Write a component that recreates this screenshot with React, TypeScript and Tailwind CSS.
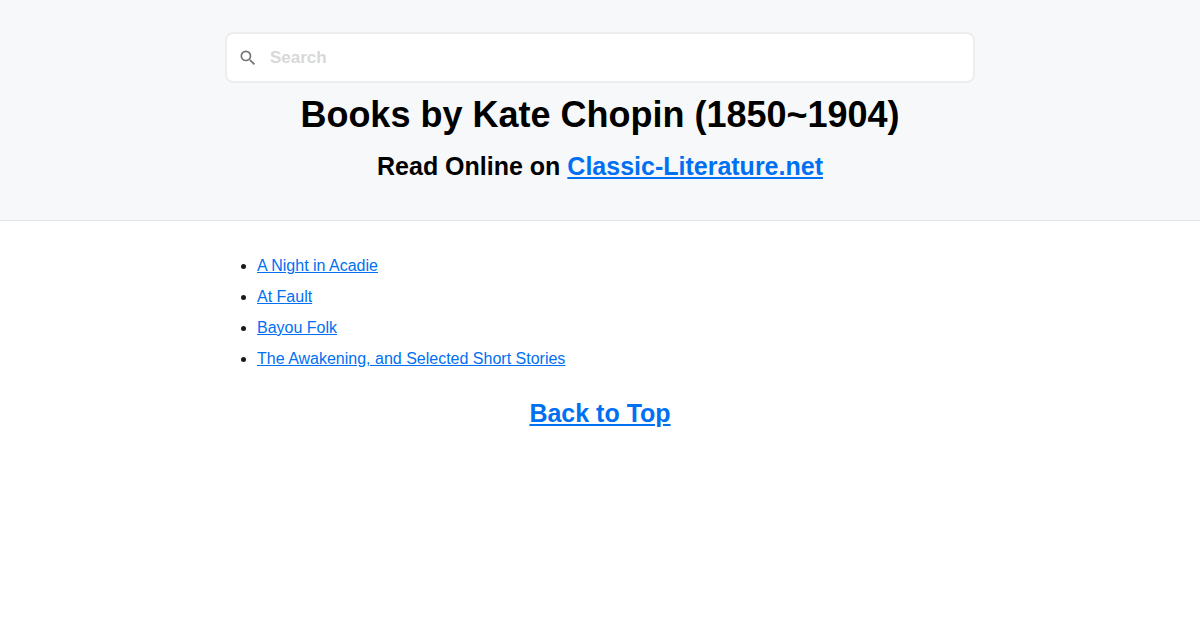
import React from 'react';
import { MdSearch } from 'react-icons/md';

const books = [
  'A Night in Acadie',
  'At Fault',
  'Bayou Folk',
  'The Awakening, and Selected Short Stories',
];

const linkClass = 'text-[#0070f3] underline';

const App: React.FC = () => {
  return (
    <div id="top" className="min-h-screen bg-white font-['Liberation_Sans',Arial,sans-serif] text-black">
      <header className="border-b border-[#e1e4e8] bg-[#f7f8fa] px-4 pt-8 pb-9">
        <div className="mx-auto max-w-[750px]">
          <form role="search" onSubmit={e => e.preventDefault()}>
            <label className="flex h-[51px] items-center gap-3 rounded-lg border-2 border-[#ededed] bg-white px-[11px]">
              <MdSearch className="size-5 shrink-0 text-[#757575]" aria-hidden="true" />
              <input
                type="search"
                aria-label="Search"
                placeholder="Search"
                className="min-w-0 flex-1 bg-transparent text-[17px] font-bold outline-none placeholder:text-[#d8d8d8]"
              />
            </label>
          </form>
          <h1 className="mt-2 text-center text-[36px] leading-[48px] font-bold">
            Books by Kate Chopin (1850~1904)
          </h1>
          <h2 className="mt-[10px] text-center text-[25px] leading-[35px] font-bold">
            Read Online on{' '}
            <a href="#top" className={linkClass}>Classic-Literature.net</a>
          </h2>
        </div>
      </header>

      <main className="mx-auto max-w-[782px] px-4 pt-[29px]">
        <ul className="list-disc pl-8 text-[16px] leading-[31px] marker:text-[#1a1a1a]">
          {books.map(title => (
            <li key={title}>
              <a href="#top" className={linkClass}>{title}</a>
            </li>
          ))}
        </ul>
        <h2 className="mt-[22px] text-center text-[25px] leading-[35px] font-bold">
          <a href="#top" className={linkClass}>Back to Top</a>
        </h2>
      </main>
    </div>
  );
};

export default App;
